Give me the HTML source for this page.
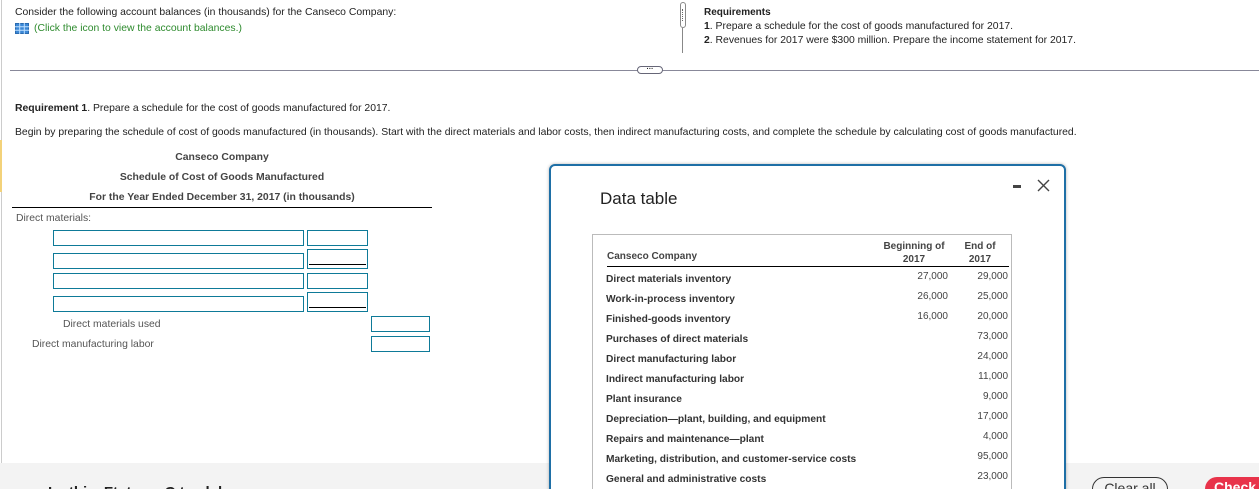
<!DOCTYPE html>
<html><head><meta charset="utf-8"><style>
*{margin:0;padding:0;box-sizing:border-box}
html,body{width:1259px;height:489px;overflow:hidden}
body{background:#fff;font-family:"Liberation Sans",sans-serif;color:#222;position:relative;font-size:10.4px}
.a{position:absolute;white-space:nowrap}
.in{position:absolute;border:1.5px solid #0e7a98;background:#fff}
.ul{position:absolute;border-bottom:1px solid #000}
.row{position:absolute;left:606px;font-size:10.2px;color:#333;font-weight:bold}
.n{position:absolute;font-size:10px;color:#444;text-align:right;width:60px}
</style></head><body>
<div class="a" style="left:1px;top:0;width:1px;height:463px;background:#ccc"></div>
<div class="a" style="left:0;top:140px;width:2px;height:52px;background:#f3d27a"></div>
<div class="a" style="left:15px;top:7px">Consider the following account balances (in thousands) for the Canseco Company:</div>
<div class="a" style="left:15px;top:23px;width:14px;height:11px;background:#3c88d6;border:1px solid #2a6bb0"></div>
<svg class="a" style="left:15px;top:23px" width="14" height="11"><path d="M4.7 0V11M9.3 0V11M0 3.7H14M0 7.3H14" stroke="#bfe0ff" stroke-width="1"/></svg>
<div class="a" style="left:34px;top:23px;color:#2e8b2e">(Click the icon to view the account balances.)</div>
<div class="a" style="left:680px;top:2px;width:6px;height:26px;border:1px solid #888;border-radius:3px;background:#fff"></div>
<div class="a" style="left:682px;top:9px;width:1px;height:12px;border-left:1px dotted #666"></div>
<div class="a" style="left:682px;top:28px;width:1px;height:25px;background:#888"></div>
<div class="a" style="left:704px;top:7px;font-weight:bold;font-size:10px">Requirements</div>
<div class="a" style="left:704px;top:21px;font-size:10.4px"><b>1</b>. Prepare a schedule for the cost of goods manufactured for 2017.</div>
<div class="a" style="left:704px;top:35px;font-size:10.4px"><b>2</b>. Revenues for 2017 were $300 million. Prepare the income statement for 2017.</div>
<div class="a" style="left:10px;top:70px;width:1249px;height:1px;background:#889"></div>
<div class="a" style="left:637px;top:66px;width:26px;height:8px;border:1px solid #667;border-radius:4px;background:#fff;font-size:7px;line-height:5px;text-align:center;font-weight:bold">···</div>
<div class="a" style="left:15px;top:103px"><b>Requirement 1</b>. Prepare a schedule for the cost of goods manufactured for 2017.</div>
<div class="a" style="left:15px;top:127px">Begin by preparing the schedule of cost of goods manufactured (in thousands). Start with the direct materials and labor costs, then indirect manufacturing costs, and complete the schedule by calculating cost of goods manufactured.</div>
<div class="a" style="left:12px;top:152px;width:420px;text-align:center;font-weight:bold;color:#444">Canseco Company</div>
<div class="a" style="left:12px;top:172px;width:420px;text-align:center;font-weight:bold;color:#444">Schedule of Cost of Goods Manufactured</div>
<div class="a" style="left:12px;top:192px;width:420px;text-align:center;font-weight:bold;color:#444">For the Year Ended December 31, 2017 (in thousands)</div>
<div class="a" style="left:12px;top:207px;width:420px;height:1px;background:#000"></div>
<div class="a" style="left:16px;top:213px;color:#555">Direct materials:</div>
<div class="in" style="left:53px;top:230px;width:251px;height:16px"></div>
<div class="in" style="left:307px;top:230px;width:61px;height:16px"></div>
<div class="in" style="left:53px;top:253px;width:251px;height:16px"></div>
<div class="in" style="left:307px;top:249px;width:61px;height:20px"></div>
<div class="ul" style="left:309px;top:264px;width:57px"></div>
<div class="in" style="left:53px;top:273px;width:251px;height:16px"></div>
<div class="in" style="left:307px;top:273px;width:61px;height:16px"></div>
<div class="in" style="left:53px;top:296px;width:251px;height:16px"></div>
<div class="in" style="left:307px;top:292px;width:61px;height:20px"></div>
<div class="ul" style="left:309px;top:307px;width:57px"></div>
<div class="a" style="left:63px;top:319px;color:#555">Direct materials used</div>
<div class="in" style="left:371px;top:316px;width:59px;height:16px"></div>
<div class="a" style="left:32px;top:339px;color:#555">Direct manufacturing labor</div>
<div class="in" style="left:371px;top:336px;width:59px;height:16px"></div>
<div class="a" style="left:0;top:463px;width:1259px;height:26px;background:#f3f3f3"></div>
<div class="a" style="left:1092px;top:477px;width:76px;height:24px;border:1.5px solid #333;border-radius:12px;background:#f3f3f3;font-size:14px;text-align:center;line-height:20px;color:#333">Clear all</div>
<div class="a" style="left:1205px;top:477px;width:70px;height:24px;border-radius:12px;background:#e8334a;font-size:14px;color:#fff;padding-left:9px;line-height:20px;font-weight:bold">Check</div>
<div class="a" style="left:48px;top:484px;font-size:15px;font-weight:bold;color:#222;white-space:pre">I    thi    Ft  t        C t     l  l</div>
<div class="a" style="left:549px;top:164px;width:517px;height:340px;border:2px solid #1e6fa6;border-radius:6px;background:#fff;box-shadow:0 0 3px rgba(0,0,0,.3)"></div>
<div class="a" style="left:600px;top:189px;font-size:17px;color:#222">Data table</div>
<div class="a" style="left:1013px;top:185px;width:8px;height:3px;background:#444"></div>
<svg class="a" style="left:1037px;top:179px" width="13" height="13"><path d="M1 1L12 12M12 1L1 12" stroke="#444" stroke-width="1.4"/></svg>
<div class="a" style="left:592px;top:234px;width:420px;height:270px;border:1px solid #bbb"></div>
<div class="a" style="left:607px;top:251px;font-size:10px;color:#444;font-weight:bold">Canseco Company</div>
<div class="a" style="left:874px;top:240px;width:80px;text-align:center;font-size:10px;color:#444;font-weight:bold;line-height:13px">Beginning of<br>2017</div>
<div class="a" style="left:955px;top:240px;width:50px;text-align:center;font-size:10px;color:#444;font-weight:bold;line-height:13px">End of<br>2017</div>
<div class="a" style="left:607px;top:266px;width:402px;height:1px;background:#000"></div>
<div class="row" style="top:274px">Direct materials inventory</div>
<div class="row" style="top:294px">Work-in-process inventory</div>
<div class="row" style="top:314px">Finished-goods inventory</div>
<div class="row" style="top:334px">Purchases of direct materials</div>
<div class="row" style="top:354px">Direct manufacturing labor</div>
<div class="row" style="top:374px">Indirect manufacturing labor</div>
<div class="row" style="top:394px">Plant insurance</div>
<div class="row" style="top:414px">Depreciation—plant, building, and equipment</div>
<div class="row" style="top:434px">Repairs and maintenance—plant</div>
<div class="row" style="top:454px">Marketing, distribution, and customer-service costs</div>
<div class="row" style="top:474px">General and administrative costs</div>
<div class="n" style="left:888px;top:271px">27,000</div><div class="n" style="left:948px;top:271px">29,000</div>
<div class="n" style="left:888px;top:291px">26,000</div><div class="n" style="left:948px;top:291px">25,000</div>
<div class="n" style="left:888px;top:311px">16,000</div><div class="n" style="left:948px;top:311px">20,000</div>
<div class="n" style="left:948px;top:331px">73,000</div>
<div class="n" style="left:948px;top:351px">24,000</div>
<div class="n" style="left:948px;top:371px">11,000</div>
<div class="n" style="left:948px;top:391px">9,000</div>
<div class="n" style="left:948px;top:411px">17,000</div>
<div class="n" style="left:948px;top:431px">4,000</div>
<div class="n" style="left:948px;top:451px">95,000</div>
<div class="n" style="left:948px;top:471px">23,000</div>
</body></html>
